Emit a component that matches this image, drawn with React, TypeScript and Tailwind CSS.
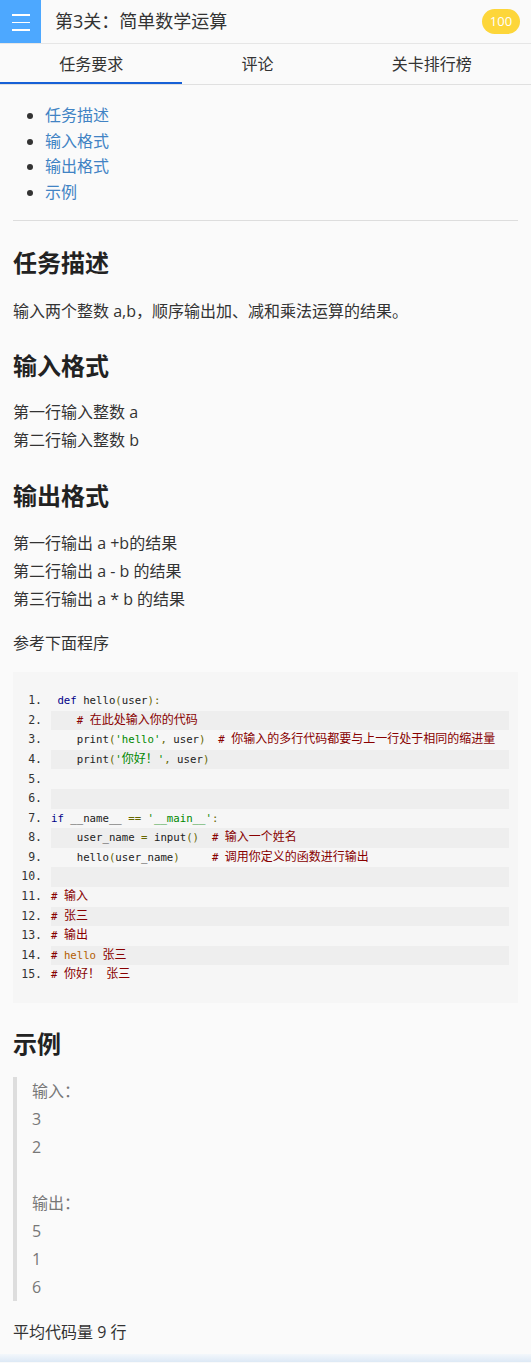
const CJK = /([\u2e80-\u9fff\u3000-\u303f\uff00-\uffef]+)/;

// CJK runs inside code render a bit larger than the mono latin
function Txt({ s }: { s: string }) {
  const parts = s.split(CJK);
  return (
    <>
      {parts.map((p, i) =>
        i % 2 === 1 ? (
          <span key={i} className="text-[12px]">
            {p}
          </span>
        ) : (
          p
        )
      )}
    </>
  );
}

const kwd = "text-[#000088]";
const pln = "text-[#222]";
const pun = "text-[#666600]";
const str = "text-[#008800]";
const com = "text-[#880000]";

type Tok = [string, string];

const code: Tok[][] = [
  [[" ", pln], ["def", kwd], [" hello", pln], ["(", pun], ["user", pln], ["):", pun]],
  [["    ", pln], ["# 在此处输入你的代码", com]],
  [["    print", pln], ["(", pun], ["'hello'", str], [",", pun], [" user", pln], [")", pun], ["  # 你输入的多行代码都要与上一行处于相同的缩进量", com]],
  [["    print", pln], ["(", pun], ["'你好！'", str], [",", pun], [" user", pln], [")", pun]],
  [],
  [],
  [["if", kwd], [" __name__ ", pln], ["==", pun], [" ", pln], ["'__main__'", str], [":", pun]],
  [["    user_name ", pln], ["=", pun], [" input", pln], ["()", pun], ["  # 输入一个姓名", com]],
  [["    hello", pln], ["(", pun], ["user_name", pln], [")", pun], ["     # 调用你定义的函数进行输出", com]],
  [],
  [["# 输入", com]],
  [["# 张三", com]],
  [["# 输出", com]],
  [["# ", com], ["hello", "text-[#b35c00]"], [" 张三", com]],
  [["# 你好！ 张三", com]],
];

export default function App() {
  return (
    <div className="min-h-[1363px] bg-[#fafafa] text-[#333] font-['Open_Sans','Noto_Sans_CJK_SC',sans-serif]">
      <header className="flex h-[44px] items-center border-b border-[#e6e6e6]">
        <div className="flex h-full w-[41px] flex-col items-center justify-center gap-[6px] bg-[#4da8ff] pt-[2px]">
          <span className="h-[1.5px] w-[18px] bg-white" />
          <span className="h-[1.5px] w-[18px] bg-white" />
          <span className="h-[1.5px] w-[18px] bg-white" />
        </div>
        <h1 className="ml-[14px] text-[18px] text-[#333]">第3关：简单数学运算</h1>
        <span className="ml-auto mr-[11px] flex h-[25px] w-[38px] items-center justify-center rounded-full bg-[#fdd63a] text-[13px] text-white">
          100
        </span>
      </header>

      <nav className="flex h-[41px] border-b border-[#e0e0e0] text-[16px] text-[#333]">
        <div className="flex-auto border-b-2 border-[#1660d6] text-center leading-[40px]">任务要求</div>
        <div className="flex-auto text-center leading-[40px]">评论</div>
        <div className="flex-auto text-center leading-[40px]">关卡排行榜</div>
      </nav>

      <main className="px-[13px] text-[16px]">
        <ul className="mt-[18px] list-disc pl-[32px] leading-[25.6px] text-[#4183c4] marker:text-[#333]">
          <li>任务描述</li>
          <li>输入格式</li>
          <li>输出格式</li>
          <li>示例</li>
        </ul>
        <hr className="mt-[14.6px] border-[#ddd]" />

        <h2 className="mt-[24px] text-[24px] font-bold leading-[36px] text-[#222]">任务描述</h2>
        <p className="mt-[16px] leading-[28px]">输入两个整数 a,b，顺序输出加、减和乘法运算的结果。</p>

        <h2 className="mt-[23px] text-[24px] font-bold leading-[36px] text-[#222]">输入格式</h2>
        <p className="mt-[14px] leading-[28px]">
          第一行输入整数 a
          <br />
          第二行输入整数 b
        </p>

        <h2 className="mt-[24px] text-[24px] font-bold leading-[36px] text-[#222]">输出格式</h2>
        <p className="mt-[15px] leading-[28px]">
          第一行输出 a +b的结果
          <br />
          第二行输出 a - b 的结果
          <br />
          第三行输出 a * b 的结果
        </p>
        <p className="mt-[16px] leading-[28px]">参考下面程序</p>

        <div className="mt-[15px] bg-[#f6f6f6] pb-[18px] pt-[19px] pr-[9px] font-['DejaVu_Sans_Mono','Noto_Sans_CJK_SC',monospace]">
          {code.map((line, i) => (
            <div key={i} className="flex h-[19.6px] items-center">
              <span className="w-[38px] shrink-0 pr-[9px] text-right text-[11.5px] text-[#333]">{i + 1}.</span>
              <span className={`h-full flex-1 whitespace-pre text-[10.7px] leading-[19.6px] ${i % 2 === 1 ? "bg-[#eeeeee]" : ""}`}>
                {line.map(([t, c], j) => (
                  <span key={j} className={c}>
                    <Txt s={t} />
                  </span>
                ))}
              </span>
            </div>
          ))}
        </div>

        <h2 className="mt-[23px] text-[24px] font-bold leading-[36px] text-[#222]">示例</h2>
        <blockquote className="mt-[15px] border-l-4 border-[#ddd] pl-[15px] leading-[28px] text-[#777]">
          <p>输入：</p>
          <p>3</p>
          <p>2</p>
          <p>&nbsp;</p>
          <p>输出：</p>
          <p>5</p>
          <p>1</p>
          <p>6</p>
        </blockquote>
        <p className="mt-[17px] leading-[28px]">平均代码量 9 行</p>
      </main>
      <div className="mt-[8px] h-[8px] bg-gradient-to-b from-[#f3f7fb] to-[#dde9f6]" />
    </div>
  );
}
